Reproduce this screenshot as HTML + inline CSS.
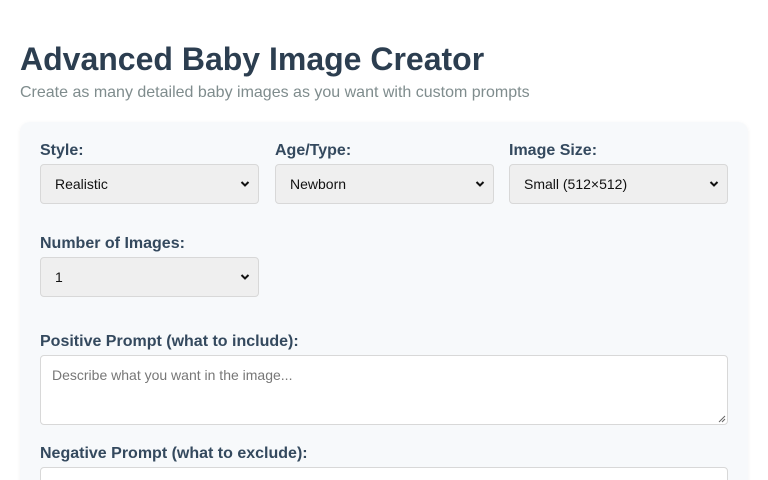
<!DOCTYPE html>
<html><head><meta charset="utf-8"><style>
html,body{margin:0;background:#fff;font-family:"Liberation Sans",Arial,sans-serif;width:768px;height:480px;overflow:hidden;position:relative}
h1{position:absolute;left:20px;top:40px;margin:0;font-size:32px;line-height:38px;color:#2c3e50;font-weight:bold}
.sub{position:absolute;left:20px;top:83px;font-size:16px;line-height:19px;color:#7f8c8d}
.panel{position:absolute;left:20px;top:122px;width:728px;height:380px;background:#f7f9fb;border-radius:10px;box-shadow:0 1px 4px rgba(0,0,0,.05)}
.lbl{position:absolute;font-size:16px;font-weight:bold;color:#34495e;line-height:19px}
.sel{position:absolute;height:38px;width:217px;background:#efefef;border:1px solid #d8d8d8;border-radius:4px;font-size:14px;color:#111;line-height:38px;box-sizing:content-box}
.sel span{position:absolute;left:14px}
.sel svg{position:absolute;right:8px;top:15px}
.ta{position:absolute;left:40px;width:686px;background:#fff;border:1px solid #d8d8d8;border-radius:4px}
</style></head><body>
<h1>Advanced Baby Image Creator</h1>
<div class="sub">Create as many detailed baby images as you want with custom prompts</div>
<div class="panel"></div>
<div class="lbl" style="left:40px;top:141px">Style:</div>
<div class="lbl" style="left:275px;top:141px">Age/Type:</div>
<div class="lbl" style="left:509px;top:141px">Image Size:</div>
<div class="sel" style="left:40px;top:164px"><span>Realistic</span><svg width="10" height="8" viewBox="0 0 10 8"><path d="M1.5 2l3.5 3.5L8.5 2" stroke="#111" stroke-width="2" fill="none"/></svg></div>
<div class="sel" style="left:275px;top:164px"><span>Newborn</span><svg width="10" height="8" viewBox="0 0 10 8"><path d="M1.5 2l3.5 3.5L8.5 2" stroke="#111" stroke-width="2" fill="none"/></svg></div>
<div class="sel" style="left:509px;top:164px"><span>Small (512×512)</span><svg width="10" height="8" viewBox="0 0 10 8"><path d="M1.5 2l3.5 3.5L8.5 2" stroke="#111" stroke-width="2" fill="none"/></svg></div>
<div class="lbl" style="left:40px;top:234px">Number of Images:</div>
<div class="sel" style="left:40px;top:257px"><span>1</span><svg width="10" height="8" viewBox="0 0 10 8"><path d="M1.5 2l3.5 3.5L8.5 2" stroke="#111" stroke-width="2" fill="none"/></svg></div>
<div class="lbl" style="left:40px;top:332px">Positive Prompt (what to include):</div>
<div class="ta" style="top:355px;height:68px"><span style="position:absolute;left:11px;top:11px;font-size:14px;color:#777">Describe what you want in the image...</span><svg style="position:absolute;right:1px;bottom:1px" width="9" height="9" viewBox="0 0 9 9"><path d="M8 2L2 8M8 5L5 8" stroke="#666" stroke-width="1"/></svg></div>
<div class="lbl" style="left:40px;top:444px">Negative Prompt (what to exclude):</div>
<div class="ta" style="top:467px;height:40px"></div>
</body></html>
